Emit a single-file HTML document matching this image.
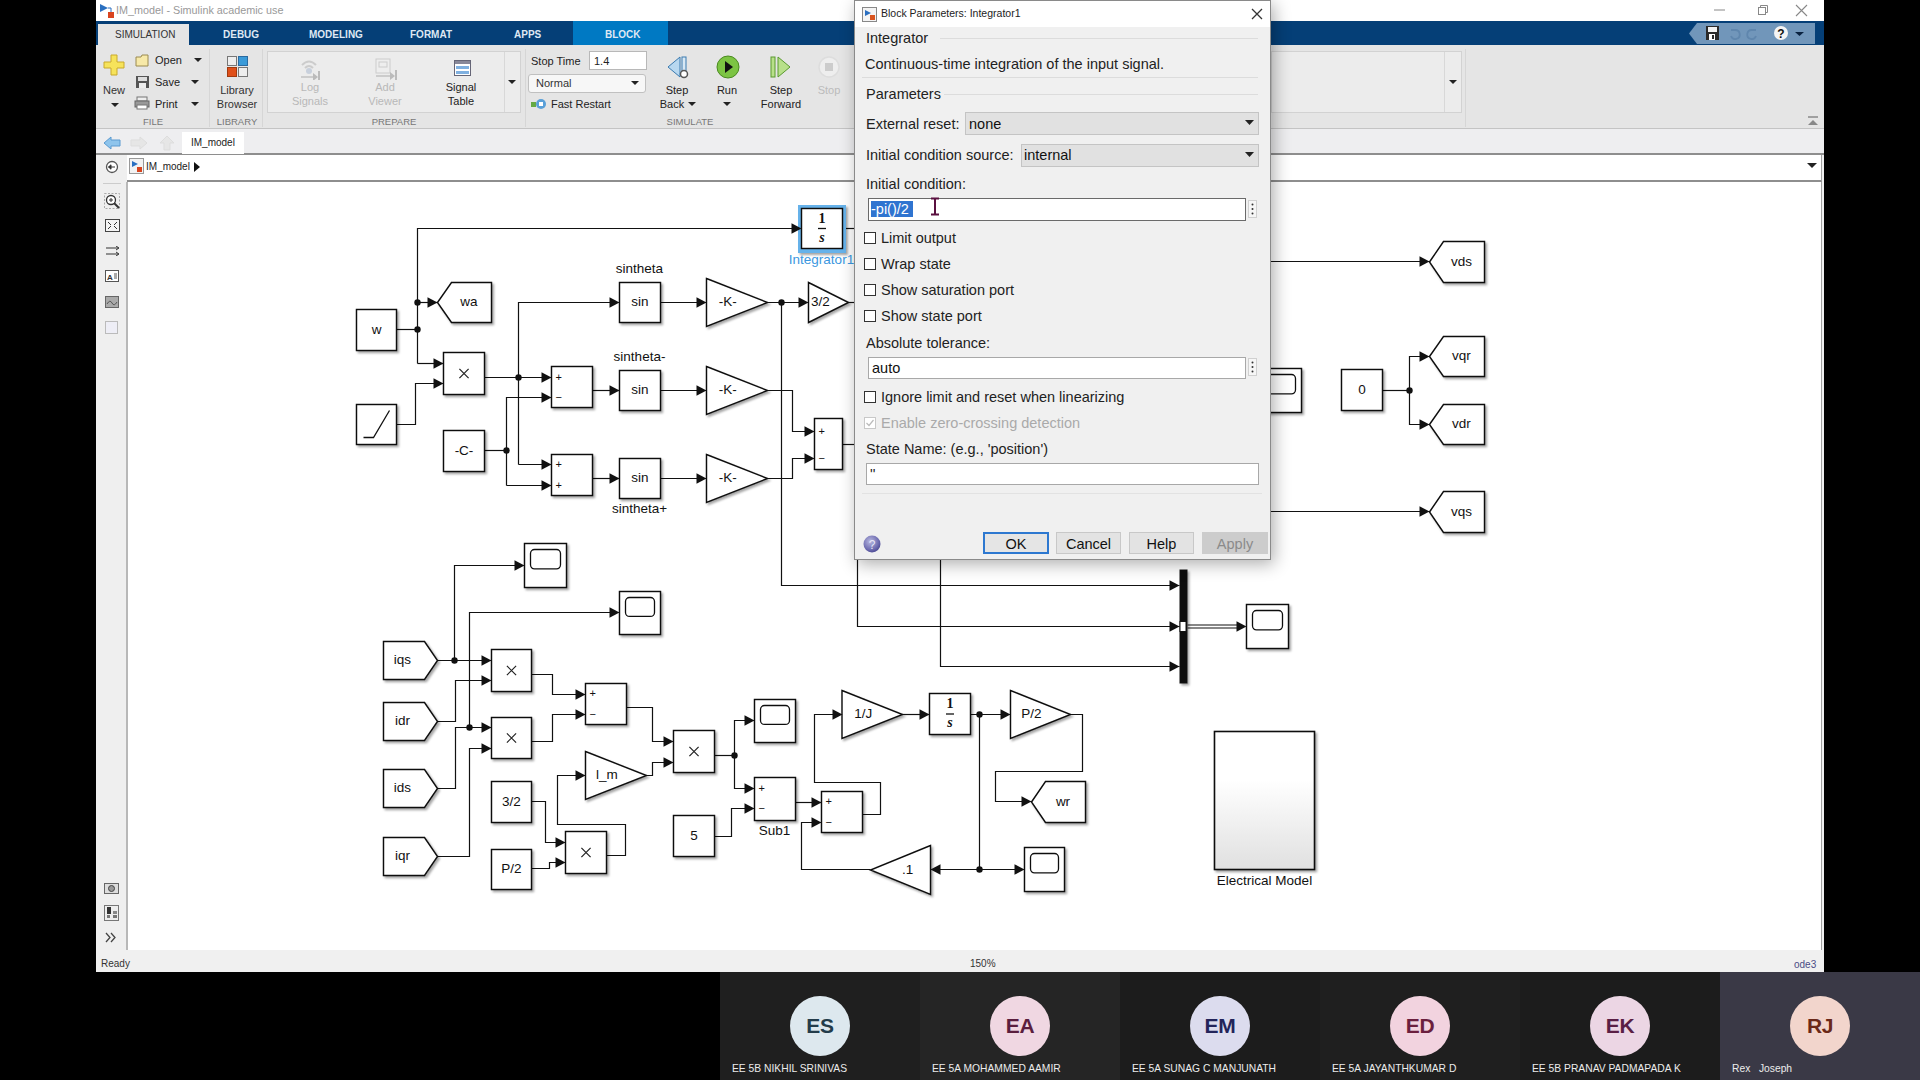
<!DOCTYPE html><html><head><meta charset="utf-8"><style>
*{margin:0;padding:0;box-sizing:border-box}
html,body{width:1920px;height:1080px;overflow:hidden;background:#000;font-family:"Liberation Sans",sans-serif;}
.a{position:absolute}
.t{position:absolute;white-space:nowrap;line-height:1}
</style></head><body>
<div class="a" style="left:96px;top:0px;width:1728px;height:972px;background:#f0f0f0"></div><div class="a" style="left:96px;top:0px;width:1728px;height:21px;background:#fff"></div><div class="t" style="left:116px;top:5px;font-size:10.8px;color:#999;">IM_model - Simulink academic use</div><div class="a" style="left:96px;top:21px;width:1728px;height:24px;background:#053f77"></div><div class="a" style="left:98px;top:24px;width:91px;height:21px;background:#e5e5e5"></div><div class="t" style="left:115px;top:30px;font-size:10px;color:#333;">SIMULATION</div><div class="t" style="left:223px;top:30px;font-size:10px;color:#dfe8f3;font-weight:bold">DEBUG</div><div class="t" style="left:309px;top:30px;font-size:10px;color:#dfe8f3;font-weight:bold">MODELING</div><div class="t" style="left:410px;top:30px;font-size:10px;color:#dfe8f3;font-weight:bold">FORMAT</div><div class="a" style="left:573px;top:21px;width:95px;height:24px;background:#0079c3"></div><div class="t" style="left:514px;top:30px;font-size:10px;color:#dfe8f3;font-weight:bold">APPS</div><div class="t" style="left:605px;top:30px;font-size:10px;color:#dfe8f3;font-weight:bold">BLOCK</div><div class="a" style="left:96px;top:45px;width:1728px;height:84px;background:#e5e5e5;border-bottom:1px solid #c4c4c4"></div><div class="a" style="left:96px;top:129px;width:1728px;height:26px;background:#eeeef0;border-bottom:2px solid #8e8e8e"></div><div class="a" style="left:182px;top:132px;width:62px;height:22px;background:#fff"></div><div class="t" style="left:191px;top:138px;font-size:10px;color:#222;">IM_model</div><div class="a" style="left:126px;top:155px;width:1696px;height:27px;background:#fff;border-bottom:2px solid #8e8e8e;border-right:1px solid #a0a0a0"></div><div class="t" style="left:146px;top:162px;font-size:10px;color:#222;">IM_model</div><div class="a" style="left:96px;top:155px;width:31px;height:795px;background:#efefef"></div><div class="a" style="left:126px;top:182px;width:1696px;height:769px;background:#fff;border-left:2px solid #b8b8b8;border-right:1px solid #a0a0a0;border-bottom:1px solid #a8a8a8"></div><div class="a" style="left:96px;top:950px;width:1728px;height:22px;background:#f0f0f0"></div><div class="t" style="left:101px;top:959px;font-size:10px;color:#333;">Ready</div><div class="t" style="left:970px;top:959px;font-size:10px;color:#333;">150%</div><div class="t" style="left:1794px;top:960px;font-size:10px;color:#4b4b85;">ode3</div><svg class="a" style="left:103px;top:54px" width="22" height="22"><path d="M8,1H14V8H21V14H14V21H8V14H1V8H8Z" fill="#f6e35a" stroke="#c9a92a" stroke-width="1"/></svg><div class="t" style="left:54px;top:85px;width:120px;text-align:center;font-size:11px;color:#333;">New</div><svg class="a" style="left:111px;top:103px" width="8" height="5"><path d="M0,0H8L4,4Z" fill="#222"/></svg><svg class="a" style="left:135px;top:54px" width="15" height="13"><path d="M1,3H6L7,1H13V12H1Z" fill="#f7e9a8" stroke="#9a8a50"/></svg><div class="t" style="left:155px;top:55px;font-size:11px;color:#222;">Open</div><svg class="a" style="left:194px;top:58px" width="8" height="5"><path d="M0,0H8L4,4Z" fill="#222"/></svg><svg class="a" style="left:135px;top:75px" width="15" height="14"><rect x="1" y="1" width="13" height="12" fill="#555"/><rect x="3" y="2" width="9" height="4" fill="#ddd"/><rect x="4" y="8" width="7" height="5" fill="#eee"/></svg><div class="t" style="left:155px;top:77px;font-size:11px;color:#222;">Save</div><svg class="a" style="left:191px;top:80px" width="8" height="5"><path d="M0,0H8L4,4Z" fill="#222"/></svg><svg class="a" style="left:134px;top:96px" width="16" height="14"><rect x="3" y="1" width="10" height="4" fill="#eee" stroke="#777"/><rect x="1" y="5" width="14" height="6" fill="#999" stroke="#666"/><rect x="3" y="9" width="10" height="4" fill="#fff" stroke="#777"/></svg><div class="t" style="left:155px;top:99px;font-size:11px;color:#222;">Print</div><svg class="a" style="left:191px;top:102px" width="8" height="5"><path d="M0,0H8L4,4Z" fill="#222"/></svg><div class="t" style="left:93px;top:117px;width:120px;text-align:center;font-size:9.5px;color:#777;">FILE</div><div class="a" style="left:209px;top:49px;width:1px;height:78px;background:#d6d6d6"></div><svg class="a" style="left:227px;top:56px" width="21" height="21"><rect x="0.5" y="0.5" width="9" height="9" fill="#eee" stroke="#777"/><rect x="11.5" y="0.5" width="9" height="9" fill="#3a9ad8" stroke="#2a6aa0"/><rect x="0.5" y="11.5" width="9" height="9" fill="#e0501a" stroke="#a03a10"/><rect x="11.5" y="11.5" width="9" height="9" fill="#eee" stroke="#777"/></svg><div class="t" style="left:177px;top:85px;width:120px;text-align:center;font-size:11px;color:#333;">Library</div><div class="t" style="left:177px;top:99px;width:120px;text-align:center;font-size:11px;color:#333;">Browser</div><div class="t" style="left:177px;top:117px;width:120px;text-align:center;font-size:9.5px;color:#777;">LIBRARY</div><div class="a" style="left:262px;top:49px;width:1px;height:78px;background:#d6d6d6"></div><div class="a" style="left:267px;top:51px;width:254px;height:62px;background:#ececec;border:1px solid #d2d2d2"></div><div class="a" style="left:504px;top:52px;width:1px;height:60px;background:#d8d8d8"></div><svg class="a" style="left:298px;top:58px" width="24" height="22"><path d="M4,7 Q11,0 18,7" stroke="#ccc" stroke-width="2" fill="none"/><path d="M7,10 Q11,6 15,10" stroke="#ccc" stroke-width="2" fill="none"/><circle cx="11" cy="13" r="3" fill="#c8d0dc"/><path d="M3,19H18" stroke="#ccc" stroke-width="2"/><path d="M15,15L20,19L15,23Z" fill="#bbb"/><path d="M21,13V23" stroke="#bbb" stroke-width="2"/></svg><div class="t" style="left:250px;top:82px;width:120px;text-align:center;font-size:11px;color:#b8b8b8;">Log</div><div class="t" style="left:250px;top:96px;width:120px;text-align:center;font-size:11px;color:#b8b8b8;">Signals</div><svg class="a" style="left:375px;top:58px" width="24" height="22"><rect x="1" y="1" width="14" height="14" fill="#eee" stroke="#ccc"/><rect x="4" y="4" width="8" height="5" fill="none" stroke="#ccc"/><path d="M1,18H18" stroke="#ccc" stroke-width="2"/><path d="M15,14L20,18L15,22Z" fill="#bbb"/><path d="M21,12V22" stroke="#bbb" stroke-width="2"/></svg><div class="t" style="left:325px;top:82px;width:120px;text-align:center;font-size:11px;color:#b8b8b8;">Add</div><div class="t" style="left:325px;top:96px;width:120px;text-align:center;font-size:11px;color:#b8b8b8;">Viewer</div><svg class="a" style="left:454px;top:60px" width="17" height="16"><rect x="0.5" y="0.5" width="16" height="15" fill="#fff" stroke="#667"/><rect x="1" y="1" width="15" height="3" fill="#889"/><rect x="2" y="6" width="13" height="3" fill="#7fb0e0"/><rect x="2" y="11" width="13" height="3" fill="#7fb0e0"/></svg><div class="t" style="left:401px;top:82px;width:120px;text-align:center;font-size:11px;color:#222;">Signal</div><div class="t" style="left:401px;top:96px;width:120px;text-align:center;font-size:11px;color:#222;">Table</div><svg class="a" style="left:508px;top:80px" width="8" height="5"><path d="M0,0H8L4,4Z" fill="#222"/></svg><div class="t" style="left:334px;top:117px;width:120px;text-align:center;font-size:9.5px;color:#777;">PREPARE</div><div class="a" style="left:525px;top:49px;width:1px;height:78px;background:#d6d6d6"></div><div class="t" style="left:531px;top:56px;font-size:11px;color:#222;">Stop Time</div><div class="a" style="left:589px;top:51px;width:58px;height:19px;background:#fff;border:1px solid #b8b8b8"></div><div class="t" style="left:594px;top:56px;font-size:11px;color:#222;">1.4</div><div class="a" style="left:528px;top:74px;width:118px;height:19px;background:#f7f7f7;border:1px solid #c0c0c0;border-radius:3px"></div><div class="t" style="left:536px;top:78px;font-size:11px;color:#333;">Normal</div><svg class="a" style="left:631px;top:81px" width="8" height="5"><path d="M0,0H8L4,4Z" fill="#222"/></svg><svg class="a" style="left:531px;top:98px" width="15" height="12"><rect x="0" y="4" width="5" height="5" fill="#6a4" /><circle cx="10" cy="6" r="5" fill="#5aa0d8"/><rect x="8" y="4" width="4" height="4" fill="#fff"/></svg><div class="t" style="left:551px;top:99px;font-size:11px;color:#222;">Fast Restart</div><svg class="a" style="left:667px;top:55px" width="22" height="24"><path d="M1,12L13,2V22Z" fill="#b8d8f0" stroke="#3a7ab0"/><rect x="15" y="2" width="4" height="16" fill="#d8e8f4" stroke="#3a7ab0"/><circle cx="17" cy="19" r="3.5" fill="#fff" stroke="#555" stroke-width="1.5"/></svg><div class="t" style="left:617px;top:85px;width:120px;text-align:center;font-size:11px;color:#222;">Step</div><div class="t" style="left:612px;top:99px;width:120px;text-align:center;font-size:11px;color:#222;">Back</div><svg class="a" style="left:688px;top:102px" width="8" height="5"><path d="M0,0H8L4,4Z" fill="#222"/></svg><svg class="a" style="left:716px;top:55px" width="24" height="24"><circle cx="12" cy="12" r="11" fill="#7cc443" stroke="#4a8a20"/><path d="M9,6L17,12L9,18Z" fill="#111"/></svg><div class="t" style="left:667px;top:85px;width:120px;text-align:center;font-size:11px;color:#222;">Run</div><svg class="a" style="left:723px;top:102px" width="8" height="5"><path d="M0,0H8L4,4Z" fill="#222"/></svg><svg class="a" style="left:770px;top:56px" width="21" height="22"><rect x="1" y="1" width="4" height="20" fill="#b8e08a" stroke="#5a9a30"/><path d="M8,1L20,11L8,21Z" fill="#b8e08a" stroke="#5a9a30"/></svg><div class="t" style="left:721px;top:85px;width:120px;text-align:center;font-size:11px;color:#222;">Step</div><div class="t" style="left:721px;top:99px;width:120px;text-align:center;font-size:11px;color:#222;">Forward</div><svg class="a" style="left:818px;top:56px" width="22" height="22"><circle cx="11" cy="11" r="10" fill="#eee" stroke="#ddd" stroke-width="1.5"/><rect x="7" y="7" width="8" height="8" fill="#ccc"/></svg><div class="t" style="left:769px;top:85px;width:120px;text-align:center;font-size:11px;color:#bbb;">Stop</div><div class="t" style="left:630px;top:117px;width:120px;text-align:center;font-size:9.5px;color:#777;">SIMULATE</div><div class="a" style="left:1271px;top:51px;width:191px;height:62px;background:#ececec;border:1px solid #d2d2d2"></div><div class="a" style="left:1444px;top:52px;width:1px;height:60px;background:#d8d8d8"></div><svg class="a" style="left:1449px;top:80px" width="8" height="5"><path d="M0,0H8L4,4Z" fill="#222"/></svg><div class="a" style="left:1465px;top:49px;width:1px;height:78px;background:#d6d6d6"></div><svg class="a" style="left:1807px;top:116px" width="12" height="10"><path d="M1,1H11" stroke="#888" stroke-width="1.5"/><path d="M1,9L6,4L11,9Z" fill="#888"/></svg><svg class="a" style="left:1689px;top:23px" width="126" height="21"><path d="M8,0H126V21H8L0,10.5Z" fill="#7196ba"/><rect x="17" y="3" width="13" height="14" fill="#2a2a2a"/><rect x="19" y="4" width="9" height="5" fill="#f2f2f2"/><rect x="20" y="11" width="6" height="6" fill="#fff"/><rect x="23" y="12" width="2" height="4" fill="#2a2a2a"/><path d="M42,13a4.5,4.5 0 1 0 4,-6h-4" stroke="#5f86ad" stroke-width="1.8" fill="none"/><path d="M67,13a4.5,4.5 0 1 1 -4,-6h4" stroke="#5f86ad" stroke-width="1.8" fill="none"/><circle cx="92" cy="10" r="7" fill="#f4f4f4"/><text x="92" y="14.5" font-size="12" font-weight="bold" text-anchor="middle" fill="#111" font-family="Liberation Sans">?</text><path d="M106,9H115L110.5,13Z" fill="#0a2240"/></svg><svg class="a" style="left:1713px;top:4px" width="110" height="14"><path d="M1,6H12" stroke="#888" stroke-width="1"/><rect x="45.5" y="3.5" width="7" height="7" fill="none" stroke="#888"/><path d="M47.5,3.5V1.5H54.5V8.5H52.5" fill="none" stroke="#888"/><path d="M83,1L94,12M94,1L83,12" stroke="#888" stroke-width="1.1"/></svg><svg class="a" style="left:99px;top:3px" width="17" height="16"><path d="M1,1L9,5L1,9Z" fill="#2a6fc0"/><path d="M9,5H12V9" stroke="#2a6fc0" fill="none"/><rect x="9" y="9" width="6" height="6" fill="#d9441e"/></svg><svg class="a" style="left:103px;top:136px" width="18" height="14"><path d="M1,7L8,1V4H17V10H8V13Z" fill="#8ec4ec" stroke="#5a9ad0"/></svg><svg class="a" style="left:130px;top:136px" width="18" height="14"><path d="M17,7L10,1V4H1V10H10V13Z" fill="#e6e6e6" stroke="#ddd"/></svg><svg class="a" style="left:159px;top:135px" width="16" height="16"><path d="M8,1L15,8H11V15H5V8H1Z" fill="#e6e6e6" stroke="#ddd"/></svg><svg class="a" style="left:129px;top:158px" width="15" height="16"><rect x="0.5" y="0.5" width="14" height="15" fill="#f2f2f2" stroke="#999"/><path d="M3,3L9,6L3,9Z" fill="#2a6fc0"/><rect x="8" y="9" width="5" height="5" fill="#d9441e"/></svg><svg class="a" style="left:194px;top:162px" width="6" height="10"><path d="M0,0L6,5L0,10Z" fill="#111"/></svg><svg class="a" style="left:1807px;top:163px" width="10" height="6"><path d="M0,0H10L5,5Z" fill="#222"/></svg><svg class="a" style="left:105px;top:160px" width="14" height="14"><circle cx="7" cy="7" r="5.5" fill="#fff" stroke="#555" stroke-width="1.3"/><path d="M3.5,7H10M3.5,7L6,4.8V9.2Z" stroke="#333" fill="#333"/></svg><div class="a" style="left:103px;top:183px;width:18px;height:1px;background:#ccc"></div><svg class="a" style="left:104px;top:193px" width="17" height="17"><rect x="0.5" y="0.5" width="15" height="15" fill="none" stroke="#aaa" stroke-dasharray="2,1.5"/><circle cx="7" cy="7" r="4.5" fill="#fff" stroke="#333" stroke-width="1.3"/><path d="M10,10L15,15" stroke="#333" stroke-width="2"/><path d="M5,7H9M7,5V9" stroke="#333"/></svg><svg class="a" style="left:105px;top:219px" width="15" height="14"><rect x="0.5" y="0.5" width="14" height="12" fill="#f4f4f4" stroke="#444"/><path d="M3,3L6,6M12,3L9,6M3,10L6,7M12,10L9,7" stroke="#333"/></svg><svg class="a" style="left:105px;top:246px" width="15" height="10"><path d="M1,2H13M1,8H13" stroke="#333" stroke-width="1.2"/><path d="M11,0L14,2L11,4M11,6L14,8L11,10" stroke="#333" fill="none"/></svg><svg class="a" style="left:105px;top:270px" width="15" height="13"><rect x="0.5" y="0.5" width="13" height="11" fill="#fff" stroke="#555"/><text x="5" y="9.5" font-size="8" font-weight="bold" text-anchor="middle" fill="#333" font-family="Liberation Sans">A</text><path d="M9,4H12M9,6H12M9,8H12" stroke="#555"/></svg><svg class="a" style="left:105px;top:296px" width="15" height="13"><rect x="0.5" y="0.5" width="13" height="11" fill="#aaa" stroke="#666"/><path d="M2,8Q5,3 7,7T12,6" stroke="#555" fill="none"/></svg><svg class="a" style="left:105px;top:321px" width="14" height="14"><rect x="0.5" y="0.5" width="12" height="12" fill="#eeeef6" stroke="#bbb"/></svg><svg class="a" style="left:104px;top:881px" width="16" height="13"><rect x="0.5" y="2.5" width="14" height="10" fill="#ddd" stroke="#666"/><circle cx="7.5" cy="7.5" r="3" fill="#999" stroke="#444"/></svg><svg class="a" style="left:104px;top:905px" width="16" height="16"><rect x="0.5" y="0.5" width="14" height="15" fill="#eee" stroke="#777"/><rect x="3" y="2" width="4" height="7" fill="#333"/><rect x="3" y="10" width="3" height="3" fill="#777"/><rect x="9" y="6" width="4" height="3" fill="#888"/><rect x="9" y="10" width="4" height="3" fill="#777"/></svg><svg class="a" style="left:105px;top:932px" width="13" height="11"><path d="M1,1L5,5.5L1,10M6,1L10,5.5L6,10" stroke="#444" stroke-width="1.3" fill="none"/></svg><svg class="a" style="left:0;top:0" width="1920" height="1080" font-family="Liberation Sans, sans-serif"><defs><filter id="sh" x="-20%" y="-20%" width="140%" height="140%"><feDropShadow dx="1.8" dy="2" stdDeviation="1" flood-color="#000" flood-opacity="0.35"/></filter><linearGradient id="emg" x1="0" y1="0" x2="0" y2="1"><stop offset="0.35" stop-color="#fff"/><stop offset="1" stop-color="#e0e0e0"/></linearGradient><clipPath id="cv"><rect x="129" y="181" width="1693" height="767"/></clipPath></defs><g clip-path="url(#cv)"><g transform="translate(0.5,0.5)"><polyline points="396,329 417,329" fill="none" stroke="#111" stroke-width="1.2"/><polyline points="417,363 417,228 801,228" fill="none" stroke="#111" stroke-width="1.2"/><polyline points="417,302 437,302" fill="none" stroke="#111" stroke-width="1.2"/><polyline points="417,363 443,363" fill="none" stroke="#111" stroke-width="1.2"/><polyline points="396,424 415,424 415,383 443,383" fill="none" stroke="#111" stroke-width="1.2"/><polyline points="484,377 551,377" fill="none" stroke="#111" stroke-width="1.2"/><polyline points="518,464 518,302 619,302" fill="none" stroke="#111" stroke-width="1.2"/><polyline points="518,464 551,464" fill="none" stroke="#111" stroke-width="1.2"/><polyline points="484,450 506,450" fill="none" stroke="#111" stroke-width="1.2"/><polyline points="506,485 506,397 551,397" fill="none" stroke="#111" stroke-width="1.2"/><polyline points="506,485 551,485" fill="none" stroke="#111" stroke-width="1.2"/><polyline points="592,390 619,390" fill="none" stroke="#111" stroke-width="1.2"/><polyline points="592,478 619,478" fill="none" stroke="#111" stroke-width="1.2"/><polyline points="660,302 706,302" fill="none" stroke="#111" stroke-width="1.2"/><polyline points="660,390 706,390" fill="none" stroke="#111" stroke-width="1.2"/><polyline points="660,478 706,478" fill="none" stroke="#111" stroke-width="1.2"/><polyline points="767,302 808,302" fill="none" stroke="#111" stroke-width="1.2"/><polyline points="781,302 781,585 1179,585" fill="none" stroke="#111" stroke-width="1.2"/><polyline points="848,302 860,302" fill="none" stroke="#111" stroke-width="1.2"/><polyline points="767,390 792,390 792,431 814,431" fill="none" stroke="#111" stroke-width="1.2"/><polyline points="767,478 792,478 792,458 814,458" fill="none" stroke="#111" stroke-width="1.2"/><polyline points="842,444 860,444" fill="none" stroke="#111" stroke-width="1.2"/><polyline points="842,228 860,228" fill="none" stroke="#111" stroke-width="1.2"/><polyline points="857,550 857,626 1179,626" fill="none" stroke="#111" stroke-width="1.2"/><polyline points="940,550 940,666 1179,666" fill="none" stroke="#111" stroke-width="1.2"/><line x1="1187" y1="624.5" x2="1238" y2="624.5" stroke="#111" stroke-width="1.2"/><line x1="1187" y1="627.5" x2="1238" y2="627.5" stroke="#111" stroke-width="1.2"/><polyline points="1260,261 1429,261" fill="none" stroke="#111" stroke-width="1.2"/><polyline points="1260,511 1429,511" fill="none" stroke="#111" stroke-width="1.2"/><polyline points="1382,390 1409,390" fill="none" stroke="#111" stroke-width="1.2"/><polyline points="1409,390 1409,356 1429,356" fill="none" stroke="#111" stroke-width="1.2"/><polyline points="1409,390 1409,424 1429,424" fill="none" stroke="#111" stroke-width="1.2"/><polyline points="437,660 491,660" fill="none" stroke="#111" stroke-width="1.2"/><polyline points="454,660 454,565 524,565" fill="none" stroke="#111" stroke-width="1.2"/><polyline points="437,721 455,721 455,680 491,680" fill="none" stroke="#111" stroke-width="1.2"/><polyline points="437,788 455,788 455,727 491,727" fill="none" stroke="#111" stroke-width="1.2"/><polyline points="469,727 469,612 619,612" fill="none" stroke="#111" stroke-width="1.2"/><polyline points="437,856 469,856 469,748 491,748" fill="none" stroke="#111" stroke-width="1.2"/><polyline points="531,674 552,674 552,694 585,694" fill="none" stroke="#111" stroke-width="1.2"/><polyline points="531,741 552,741 552,714 585,714" fill="none" stroke="#111" stroke-width="1.2"/><polyline points="626,707 652,707 652,741 673,741" fill="none" stroke="#111" stroke-width="1.2"/><polyline points="646,775 652,775 652,762 673,762" fill="none" stroke="#111" stroke-width="1.2"/><polyline points="531,801 545,801 545,842 565,842" fill="none" stroke="#111" stroke-width="1.2"/><polyline points="531,868 549,868 549,862 565,862" fill="none" stroke="#111" stroke-width="1.2"/><polyline points="606,855 625,855 625,824 557,824 557,775 585,775" fill="none" stroke="#111" stroke-width="1.2"/><polyline points="714,755 734,755" fill="none" stroke="#111" stroke-width="1.2"/><polyline points="734,755 734,720 754,720" fill="none" stroke="#111" stroke-width="1.2"/><polyline points="734,755 734,788 754,788" fill="none" stroke="#111" stroke-width="1.2"/><polyline points="714,836 731,836 731,808 754,808" fill="none" stroke="#111" stroke-width="1.2"/><polyline points="795,802 821,802" fill="none" stroke="#111" stroke-width="1.2"/><polyline points="862,814 880,814 880,782 814,782 814,714 842,714" fill="none" stroke="#111" stroke-width="1.2"/><polyline points="902,714 929,714" fill="none" stroke="#111" stroke-width="1.2"/><polyline points="970,714 1010,714" fill="none" stroke="#111" stroke-width="1.2"/><polyline points="979,714 979,869" fill="none" stroke="#111" stroke-width="1.2"/><polyline points="979,869 1024,869" fill="none" stroke="#111" stroke-width="1.2"/><polyline points="979,869 930,869" fill="none" stroke="#111" stroke-width="1.2"/><polyline points="870,869 801,869 801,822 821,822" fill="none" stroke="#111" stroke-width="1.2"/><polyline points="1070,714 1082,714 1082,771 995,771 995,801 1031,801" fill="none" stroke="#111" stroke-width="1.2"/><g filter="url(#sh)"><rect x="356" y="309" width="40" height="41" fill="#fff" stroke="#111" stroke-width="1.45"/><rect x="356" y="404" width="40" height="40" fill="#fff" stroke="#111" stroke-width="1.45"/><polygon points="437,302.0 451,282 491,282 491,322 451,322" fill="#fff" stroke="#111" stroke-width="1.45" stroke-linejoin="miter"/><rect x="443" y="352" width="41" height="42" fill="#fff" stroke="#111" stroke-width="1.45"/><rect x="443" y="430" width="41" height="41" fill="#fff" stroke="#111" stroke-width="1.45"/><rect x="551" y="366" width="41" height="41" fill="#fff" stroke="#111" stroke-width="1.45"/><rect x="551" y="454" width="41" height="41" fill="#fff" stroke="#111" stroke-width="1.45"/><rect x="619" y="282" width="41" height="40" fill="#fff" stroke="#111" stroke-width="1.45"/><rect x="619" y="370" width="41" height="40" fill="#fff" stroke="#111" stroke-width="1.45"/><rect x="619" y="458" width="41" height="40" fill="#fff" stroke="#111" stroke-width="1.45"/><polygon points="706,278 767,302.0 706,326" fill="#fff" stroke="#111" stroke-width="1.45" stroke-linejoin="miter"/><polygon points="706,366 767,390.0 706,414" fill="#fff" stroke="#111" stroke-width="1.45" stroke-linejoin="miter"/><polygon points="706,454 767,478.0 706,502" fill="#fff" stroke="#111" stroke-width="1.45" stroke-linejoin="miter"/><polygon points="808,282 848,302.0 808,322" fill="#fff" stroke="#111" stroke-width="1.45" stroke-linejoin="miter"/><rect x="814" y="418" width="28" height="51" fill="#fff" stroke="#111" stroke-width="1.45"/><rect x="797.5" y="204.5" width="48" height="48" fill="#66b2ea" stroke="none"/><rect x="801" y="208" width="41" height="40" fill="#fff" stroke="#111" stroke-width="1.45"/><rect x="1179" y="569" width="8" height="114" fill="#111"/><rect x="1246" y="604" width="42" height="44" fill="#fff" stroke="#111" stroke-width="1.45"/><rect x="1252" y="610" width="30" height="19.36" rx="4" fill="#fff" stroke="#111" stroke-width="1.3"/><polygon points="1429,261.5 1443,241 1484,241 1484,282 1443,282" fill="#fff" stroke="#111" stroke-width="1.45" stroke-linejoin="miter"/><polygon points="1429,356.0 1443,336 1484,336 1484,376 1443,376" fill="#fff" stroke="#111" stroke-width="1.45" stroke-linejoin="miter"/><polygon points="1429,424.0 1443,404 1484,404 1484,444 1443,444" fill="#fff" stroke="#111" stroke-width="1.45" stroke-linejoin="miter"/><polygon points="1429,511.5 1443,491 1484,491 1484,532 1443,532" fill="#fff" stroke="#111" stroke-width="1.45" stroke-linejoin="miter"/><rect x="1341" y="369" width="41" height="41" fill="#fff" stroke="#111" stroke-width="1.45"/><rect x="1259" y="368" width="42" height="44" fill="#fff" stroke="#111" stroke-width="1.45"/><rect x="1265" y="374" width="30" height="19.36" rx="4" fill="#fff" stroke="#111" stroke-width="1.3"/><rect x="524" y="543" width="42" height="44" fill="#fff" stroke="#111" stroke-width="1.45"/><rect x="530" y="549" width="30" height="19.36" rx="4" fill="#fff" stroke="#111" stroke-width="1.3"/><rect x="619" y="591" width="41" height="43" fill="#fff" stroke="#111" stroke-width="1.45"/><rect x="625" y="597" width="29" height="18.92" rx="4" fill="#fff" stroke="#111" stroke-width="1.3"/><polygon points="383,641 424,641 437,660.0 424,679 383,679" fill="#fff" stroke="#111" stroke-width="1.45" stroke-linejoin="miter"/><polygon points="383,702 424,702 437,721.0 424,740 383,740" fill="#fff" stroke="#111" stroke-width="1.45" stroke-linejoin="miter"/><polygon points="383,769 424,769 437,788.0 424,807 383,807" fill="#fff" stroke="#111" stroke-width="1.45" stroke-linejoin="miter"/><polygon points="383,837 424,837 437,856.0 424,875 383,875" fill="#fff" stroke="#111" stroke-width="1.45" stroke-linejoin="miter"/><rect x="491" y="649" width="40" height="42" fill="#fff" stroke="#111" stroke-width="1.45"/><rect x="491" y="717" width="40" height="41" fill="#fff" stroke="#111" stroke-width="1.45"/><rect x="585" y="683" width="41" height="41" fill="#fff" stroke="#111" stroke-width="1.45"/><polygon points="585,751 646,775.0 585,799" fill="#fff" stroke="#111" stroke-width="1.45" stroke-linejoin="miter"/><rect x="491" y="781" width="40" height="41" fill="#fff" stroke="#111" stroke-width="1.45"/><rect x="491" y="849" width="40" height="40" fill="#fff" stroke="#111" stroke-width="1.45"/><rect x="565" y="831" width="41" height="42" fill="#fff" stroke="#111" stroke-width="1.45"/><rect x="673" y="730" width="41" height="42" fill="#fff" stroke="#111" stroke-width="1.45"/><rect x="754" y="699" width="41" height="43" fill="#fff" stroke="#111" stroke-width="1.45"/><rect x="760" y="705" width="29" height="18.92" rx="4" fill="#fff" stroke="#111" stroke-width="1.3"/><rect x="754" y="777" width="41" height="43" fill="#fff" stroke="#111" stroke-width="1.45"/><rect x="673" y="815" width="41" height="41" fill="#fff" stroke="#111" stroke-width="1.45"/><rect x="821" y="791" width="41" height="41" fill="#fff" stroke="#111" stroke-width="1.45"/><polygon points="841.5,690 902,714.0 841.5,738" fill="#fff" stroke="#111" stroke-width="1.45" stroke-linejoin="miter"/><rect x="929" y="693" width="41" height="41" fill="#fff" stroke="#111" stroke-width="1.45"/><polygon points="930,845 870,869.5 930,894" fill="#fff" stroke="#111" stroke-width="1.45" stroke-linejoin="miter"/><polygon points="1010,690 1070,714.0 1010,738" fill="#fff" stroke="#111" stroke-width="1.45" stroke-linejoin="miter"/><polygon points="1031,801.5 1045,781 1085,781 1085,822 1045,822" fill="#fff" stroke="#111" stroke-width="1.45" stroke-linejoin="miter"/><rect x="1024" y="847" width="40" height="44" fill="#fff" stroke="#111" stroke-width="1.45"/><rect x="1030" y="853" width="28" height="19.36" rx="4" fill="#fff" stroke="#111" stroke-width="1.3"/><rect x="1214" y="731" width="100" height="138" fill="url(#emg)" stroke="#111" stroke-width="1.6"/></g><polyline points="363,437 373,437 389,410" fill="none" stroke="#111" stroke-width="1.3"/><path d="M458.9,368.4L468.1,377.6M468.1,368.4L458.9,377.6" stroke="#222" stroke-width="1.2"/><line x1="817.5" y1="228.0" x2="825.5" y2="228.0" stroke="#111" stroke-width="1.3"/><rect x="1179.5" y="621" width="6" height="10" fill="#fff" stroke="#111" stroke-width="1"/><path d="M506.4,665.4L515.6,674.6M515.6,665.4L506.4,674.6" stroke="#222" stroke-width="1.2"/><path d="M506.4,732.9L515.6,742.1M515.6,732.9L506.4,742.1" stroke="#222" stroke-width="1.2"/><path d="M580.9,847.4L590.1,856.6M590.1,847.4L580.9,856.6" stroke="#222" stroke-width="1.2"/><path d="M688.9,746.4L698.1,755.6M698.1,746.4L688.9,755.6" stroke="#222" stroke-width="1.2"/><line x1="945.5" y1="713.5" x2="953.5" y2="713.5" stroke="#111" stroke-width="1.3"/><circle cx="417" cy="329" r="3.2" fill="#111"/><polygon points="801,228 791,222.7 791,233.3" fill="#111"/><polygon points="437,302 427,296.7 427,307.3" fill="#111"/><circle cx="417" cy="302" r="3.2" fill="#111"/><polygon points="443,363 433,357.7 433,368.3" fill="#111"/><polygon points="443,383 433,377.7 433,388.3" fill="#111"/><polygon points="551,377 541,371.7 541,382.3" fill="#111"/><circle cx="518" cy="377" r="3.2" fill="#111"/><polygon points="619,302 609,296.7 609,307.3" fill="#111"/><polygon points="551,464 541,458.7 541,469.3" fill="#111"/><circle cx="506" cy="450" r="3.2" fill="#111"/><polygon points="551,397 541,391.7 541,402.3" fill="#111"/><polygon points="551,485 541,479.7 541,490.3" fill="#111"/><polygon points="619,390 609,384.7 609,395.3" fill="#111"/><polygon points="619,478 609,472.7 609,483.3" fill="#111"/><polygon points="706,302 696,296.7 696,307.3" fill="#111"/><polygon points="706,390 696,384.7 696,395.3" fill="#111"/><polygon points="706,478 696,472.7 696,483.3" fill="#111"/><polygon points="808,302 798,296.7 798,307.3" fill="#111"/><circle cx="781" cy="302" r="3.2" fill="#111"/><polygon points="1179,585 1169,579.7 1169,590.3" fill="#111"/><polygon points="814,431 804,425.7 804,436.3" fill="#111"/><polygon points="814,458 804,452.7 804,463.3" fill="#111"/><polygon points="1179,626 1169,620.7 1169,631.3" fill="#111"/><polygon points="1179,666 1169,660.7 1169,671.3" fill="#111"/><polygon points="1246,626 1236,620.7 1236,631.3" fill="#111"/><polygon points="1429,261 1419,255.7 1419,266.3" fill="#111"/><polygon points="1429,511 1419,505.7 1419,516.3" fill="#111"/><circle cx="1409" cy="390" r="3.2" fill="#111"/><polygon points="1429,356 1419,350.7 1419,361.3" fill="#111"/><polygon points="1429,424 1419,418.7 1419,429.3" fill="#111"/><polygon points="491,660 481,654.7 481,665.3" fill="#111"/><circle cx="454" cy="660" r="3.2" fill="#111"/><polygon points="524,565 514,559.7 514,570.3" fill="#111"/><polygon points="491,680 481,674.7 481,685.3" fill="#111"/><polygon points="491,727 481,721.7 481,732.3" fill="#111"/><circle cx="469" cy="727" r="3.2" fill="#111"/><polygon points="619,612 609,606.7 609,617.3" fill="#111"/><polygon points="491,748 481,742.7 481,753.3" fill="#111"/><polygon points="585,694 575,688.7 575,699.3" fill="#111"/><polygon points="585,714 575,708.7 575,719.3" fill="#111"/><polygon points="673,741 663,735.7 663,746.3" fill="#111"/><polygon points="673,762 663,756.7 663,767.3" fill="#111"/><polygon points="565,842 555,836.7 555,847.3" fill="#111"/><polygon points="565,862 555,856.7 555,867.3" fill="#111"/><polygon points="585,775 575,769.7 575,780.3" fill="#111"/><circle cx="734" cy="755" r="3.2" fill="#111"/><polygon points="754,720 744,714.7 744,725.3" fill="#111"/><polygon points="754,788 744,782.7 744,793.3" fill="#111"/><polygon points="754,808 744,802.7 744,813.3" fill="#111"/><polygon points="821,802 811,796.7 811,807.3" fill="#111"/><polygon points="842,714 832,708.7 832,719.3" fill="#111"/><polygon points="929,714 919,708.7 919,719.3" fill="#111"/><polygon points="1010,714 1000,708.7 1000,719.3" fill="#111"/><circle cx="979" cy="714" r="3.2" fill="#111"/><circle cx="979" cy="869" r="3.2" fill="#111"/><polygon points="1024,869 1014,863.7 1014,874.3" fill="#111"/><polygon points="930,869 940,863.7 940,874.3" fill="#111"/><polygon points="821,822 811,816.7 811,827.3" fill="#111"/><polygon points="1031,801 1021,795.7 1021,806.3" fill="#111"/><text x="376.0" y="328.5" font-size="13.5" fill="#111" text-anchor="middle" dominant-baseline="central" >w</text><text x="468.5" y="301.0" font-size="13.5" fill="#111" text-anchor="middle" dominant-baseline="central" >wa</text><text x="463.5" y="449.5" font-size="13.5" fill="#111" text-anchor="middle" dominant-baseline="central" >-C-</text><text x="555" y="376" font-size="11" fill="#111" text-anchor="start" dominant-baseline="central" >+</text><text x="555" y="396" font-size="11" fill="#111" text-anchor="start" dominant-baseline="central" >−</text><text x="555" y="463" font-size="11" fill="#111" text-anchor="start" dominant-baseline="central" >+</text><text x="555" y="484" font-size="11" fill="#111" text-anchor="start" dominant-baseline="central" >+</text><text x="639.5" y="301.0" font-size="13.5" fill="#111" text-anchor="middle" dominant-baseline="central" >sin</text><text x="639.5" y="389.0" font-size="13.5" fill="#111" text-anchor="middle" dominant-baseline="central" >sin</text><text x="639.5" y="477.0" font-size="13.5" fill="#111" text-anchor="middle" dominant-baseline="central" >sin</text><text x="639" y="268" font-size="13.5" fill="#111" text-anchor="middle" dominant-baseline="central" >sintheta</text><text x="639" y="356" font-size="13.5" fill="#111" text-anchor="middle" dominant-baseline="central" >sintheta-</text><text x="639" y="508" font-size="13.5" fill="#111" text-anchor="middle" dominant-baseline="central" >sintheta+</text><text x="727.35" y="301.0" font-size="13.5" fill="#111" text-anchor="middle" dominant-baseline="central" >-K-</text><text x="727.35" y="389.0" font-size="13.5" fill="#111" text-anchor="middle" dominant-baseline="central" >-K-</text><text x="727.35" y="477.0" font-size="13.5" fill="#111" text-anchor="middle" dominant-baseline="central" >-K-</text><text x="820.0" y="301.0" font-size="13.5" fill="#111" text-anchor="middle" dominant-baseline="central" >3/2</text><text x="818" y="430" font-size="11" fill="#111" text-anchor="start" dominant-baseline="central" >+</text><text x="818" y="457" font-size="11" fill="#111" text-anchor="start" dominant-baseline="central" >−</text><text x="821.5" y="222.0" font-size="14" font-weight="bold" font-family="Liberation Serif" fill="#111" text-anchor="middle">1</text><text x="821.5" y="241.0" font-size="14" font-weight="bold" font-family="Liberation Serif" font-style="italic" fill="#111" text-anchor="middle">s</text><text x="821" y="259" font-size="13.5" fill="#3b97e0" text-anchor="middle" dominant-baseline="central" >Integrator1</text><text x="1461.0" y="260.5" font-size="13.5" fill="#111" text-anchor="middle" dominant-baseline="central" >vds</text><text x="1461.0" y="355.0" font-size="13.5" fill="#111" text-anchor="middle" dominant-baseline="central" >vqr</text><text x="1461.0" y="423.0" font-size="13.5" fill="#111" text-anchor="middle" dominant-baseline="central" >vdr</text><text x="1461.0" y="510.5" font-size="13.5" fill="#111" text-anchor="middle" dominant-baseline="central" >vqs</text><text x="1361.5" y="388.5" font-size="13.5" fill="#111" text-anchor="middle" dominant-baseline="central" >0</text><text x="402.0" y="659.0" font-size="13.5" fill="#111" text-anchor="middle" dominant-baseline="central" >iqs</text><text x="402.0" y="720.0" font-size="13.5" fill="#111" text-anchor="middle" dominant-baseline="central" >idr</text><text x="402.0" y="787.0" font-size="13.5" fill="#111" text-anchor="middle" dominant-baseline="central" >ids</text><text x="402.0" y="855.0" font-size="13.5" fill="#111" text-anchor="middle" dominant-baseline="central" >iqr</text><text x="589" y="692.5" font-size="11" fill="#111" text-anchor="start" dominant-baseline="central" >+</text><text x="589" y="713" font-size="11" fill="#111" text-anchor="start" dominant-baseline="central" >−</text><text x="606.35" y="774.0" font-size="13.5" fill="#111" text-anchor="middle" dominant-baseline="central" >l_m</text><text x="511.0" y="800.5" font-size="13.5" fill="#111" text-anchor="middle" dominant-baseline="central" >3/2</text><text x="511.0" y="868.0" font-size="13.5" fill="#111" text-anchor="middle" dominant-baseline="central" >P/2</text><text x="758" y="787" font-size="11" fill="#111" text-anchor="start" dominant-baseline="central" >+</text><text x="758" y="807" font-size="11" fill="#111" text-anchor="start" dominant-baseline="central" >−</text><text x="774" y="830" font-size="13.5" fill="#111" text-anchor="middle" dominant-baseline="central" >Sub1</text><text x="693.5" y="834.5" font-size="13.5" fill="#111" text-anchor="middle" dominant-baseline="central" >5</text><text x="825" y="800.6" font-size="11" fill="#111" text-anchor="start" dominant-baseline="central" >+</text><text x="825" y="821" font-size="11" fill="#111" text-anchor="start" dominant-baseline="central" >−</text><text x="862.675" y="713.0" font-size="13.5" fill="#111" text-anchor="middle" dominant-baseline="central" >1/J</text><text x="949.5" y="707.5" font-size="14" font-weight="bold" font-family="Liberation Serif" fill="#111" text-anchor="middle">1</text><text x="949.5" y="726.5" font-size="14" font-weight="bold" font-family="Liberation Serif" font-style="italic" fill="#111" text-anchor="middle">s</text><text x="907.2" y="868.5" font-size="13.5" fill="#111" text-anchor="middle" dominant-baseline="central" >.1</text><text x="1031.0" y="713.0" font-size="13.5" fill="#111" text-anchor="middle" dominant-baseline="central" >P/2</text><text x="1062.5" y="800.5" font-size="13.5" fill="#111" text-anchor="middle" dominant-baseline="central" >wr</text><text x="1264" y="880" font-size="13.5" fill="#111" text-anchor="middle" dominant-baseline="central" >Electrical Model</text></g></g></svg><div class="a" style="left:854px;top:0px;width:417px;height:560px;background:#f0f0f0;border:1px solid #8a8a8a;box-shadow:3px 4px 16px rgba(0,0,0,0.32)"></div><div class="a" style="left:855px;top:1px;width:415px;height:26px;background:#fff"></div><svg class="a" style="left:862px;top:7px" width="15" height="15"><rect x="0.5" y="0.5" width="14" height="14" fill="#f4f4f4" stroke="#888"/><path d="M3,3 L9,6 L3,9 Z" fill="#2a6fc0"/><rect x="8" y="8" width="5" height="5" fill="#d9541e"/></svg><div class="t" style="left:881px;top:8px;font-size:10.5px;color:#222;">Block Parameters: Integrator1</div><svg class="a" style="left:1251px;top:8px" width="12" height="12"><path d="M1,1L11,11M11,1L1,11" stroke="#333" stroke-width="1.3"/></svg><div class="t" style="left:866px;top:31px;font-size:14.5px;color:#222;">Integrator</div><div class="a" style="left:940px;top:38px;width:318px;height:1px;background:#dcdcdc"></div><div class="t" style="left:865px;top:57px;font-size:14.5px;color:#222;">Continuous-time integration of the input signal.</div><div class="a" style="left:862px;top:77px;width:396px;height:1px;background:#dcdcdc"></div><div class="t" style="left:866px;top:87px;font-size:14.5px;color:#222;">Parameters</div><div class="a" style="left:944px;top:94px;width:314px;height:1px;background:#dcdcdc"></div><div class="t" style="left:866px;top:117px;font-size:14.5px;color:#222;">External reset:</div><div class="a" style="left:965px;top:112px;width:294px;height:23px;background:#e1e1e1;border:1px solid #c4c4c4"></div><div class="t" style="left:969px;top:117px;font-size:14.5px;color:#111;">none</div><svg class="a" style="left:1245px;top:120px" width="9" height="6"><path d="M0,0H9L4.5,5Z" fill="#222"/></svg><div class="t" style="left:866px;top:148px;font-size:14.5px;color:#222;">Initial condition source:</div><div class="a" style="left:1021px;top:144px;width:238px;height:23px;background:#e1e1e1;border:1px solid #c4c4c4"></div><div class="t" style="left:1024px;top:148px;font-size:14.5px;color:#111;">internal</div><svg class="a" style="left:1245px;top:152px" width="9" height="6"><path d="M0,0H9L4.5,5Z" fill="#222"/></svg><div class="t" style="left:866px;top:177px;font-size:14.5px;color:#222;">Initial condition:</div><div class="a" style="left:868px;top:198px;width:378px;height:23px;background:#fff;border:1px solid #6a6a6a"></div><div class="a" style="left:871px;top:201px;width:42px;height:16px;background:#2f74d0"></div><div class="t" style="left:871px;top:202px;font-size:14.5px;color:#fff;">-pi()/2</div><svg class="a" style="left:929px;top:197px" width="12" height="20"><path d="M2,1.5H10M6,1.5V17.5M2,17.5H10" stroke="#5a1040" stroke-width="2"/></svg><svg class="a" style="left:1248px;top:200px" width="9" height="18"><rect x="0.5" y="0.5" width="8" height="17" fill="#f6f6f6" stroke="#d0d0d0"/><circle cx="4.5" cy="4.5" r="1" fill="#333"/><circle cx="4.5" cy="9" r="1" fill="#333"/><circle cx="4.5" cy="13.5" r="1" fill="#333"/></svg><div class="a" style="left:864px;top:232px;width:12px;height:12px;background:#fff;border:1px solid #333"></div><div class="t" style="left:881px;top:231px;font-size:14.5px;color:#222;">Limit output</div><div class="a" style="left:864px;top:258px;width:12px;height:12px;background:#fff;border:1px solid #333"></div><div class="t" style="left:881px;top:257px;font-size:14.5px;color:#222;">Wrap state</div><div class="a" style="left:864px;top:284px;width:12px;height:12px;background:#fff;border:1px solid #333"></div><div class="t" style="left:881px;top:283px;font-size:14.5px;color:#222;">Show saturation port</div><div class="a" style="left:864px;top:310px;width:12px;height:12px;background:#fff;border:1px solid #333"></div><div class="t" style="left:881px;top:309px;font-size:14.5px;color:#222;">Show state port</div><div class="t" style="left:866px;top:336px;font-size:14.5px;color:#222;">Absolute tolerance:</div><div class="a" style="left:868px;top:357px;width:378px;height:22px;background:#fff;border:1px solid #a8a8a8"></div><div class="t" style="left:872px;top:361px;font-size:14.5px;color:#111;">auto</div><svg class="a" style="left:1248px;top:358px" width="9" height="18"><rect x="0.5" y="0.5" width="8" height="17" fill="#f6f6f6" stroke="#d0d0d0"/><circle cx="4.5" cy="4.5" r="1" fill="#333"/><circle cx="4.5" cy="9" r="1" fill="#333"/><circle cx="4.5" cy="13.5" r="1" fill="#333"/></svg><div class="a" style="left:864px;top:391px;width:12px;height:12px;background:#fff;border:1px solid #333"></div><div class="t" style="left:881px;top:390px;font-size:14.5px;color:#222;">Ignore limit and reset when linearizing</div><div class="a" style="left:864px;top:417px;width:12px;height:12px;background:#fff;border:1px solid #c8c8c8"></div><svg class="a" style="left:865px;top:418px" width="10" height="10"><path d="M1.5,5L4,7.5L8.5,2" stroke="#bbb" stroke-width="1.2" fill="none"/></svg><div class="t" style="left:881px;top:416px;font-size:14.5px;color:#aaa;">Enable zero-crossing detection</div><div class="t" style="left:866px;top:442px;font-size:14.5px;color:#222;">State Name: (e.g., 'position')</div><div class="a" style="left:866px;top:463px;width:393px;height:22px;background:#fff;border:1px solid #a8a8a8"></div><div class="t" style="left:870px;top:467px;font-size:14px;color:#111;">''</div><div class="a" style="left:862px;top:493px;width:400px;height:1px;background:#e2e2e2"></div><svg class="a" style="left:863px;top:535px" width="18" height="18"><defs><radialGradient id="hg" cx="0.4" cy="0.35" r="0.75"><stop offset="0" stop-color="#b8b8e0"/><stop offset="0.65" stop-color="#6e6cb0"/><stop offset="1" stop-color="#3e3c88"/></radialGradient></defs><circle cx="9" cy="9" r="8.5" fill="url(#hg)"/><text x="9" y="13.5" font-size="12" text-anchor="middle" fill="#e8e8f8" font-family="Liberation Sans">?</text></svg><div class="a" style="left:983px;top:532px;width:66px;height:22px;background:#e3e3e3;border:1px solid #c8c8c8;border:2px solid #2d78d0;background:#e5e5e5"></div><div class="t" style="left:983px;top:537px;width:66px;text-align:center;font-size:14.5px;color:#111">OK</div><div class="a" style="left:1056px;top:532px;width:65px;height:22px;background:#e3e3e3;border:1px solid #c8c8c8;"></div><div class="t" style="left:1056px;top:537px;width:65px;text-align:center;font-size:14.5px;color:#111">Cancel</div><div class="a" style="left:1129px;top:532px;width:65px;height:22px;background:#e3e3e3;border:1px solid #c8c8c8;"></div><div class="t" style="left:1129px;top:537px;width:65px;text-align:center;font-size:14.5px;color:#111">Help</div><div class="a" style="left:1202px;top:532px;width:66px;height:22px;background:#e3e3e3;border:1px solid #c8c8c8;background:#cccccc;border-color:#cccccc"></div><div class="t" style="left:1202px;top:537px;width:66px;text-align:center;font-size:14.5px;color:#8a8a8a">Apply</div><div class="a" style="left:720px;top:972px;width:200px;height:108px;background:#1f1f1f"></div><div class="a" style="left:790px;top:996px;width:60px;height:60px;background:#dde8ee;border-radius:50%"></div><div class="t" style="left:790px;top:1015px;width:60px;text-align:center;font-size:21px;font-weight:bold;letter-spacing:-0.3px;color:#233c4a">ES</div><div class="t" style="left:732px;top:1064px;font-size:10.3px;color:#ececec;">EE 5B NIKHIL SRINIVAS</div><div class="a" style="left:920px;top:972px;width:200px;height:108px;background:#252525"></div><div class="a" style="left:990px;top:996px;width:60px;height:60px;background:#f0d7e2;border-radius:50%"></div><div class="t" style="left:990px;top:1015px;width:60px;text-align:center;font-size:21px;font-weight:bold;letter-spacing:-0.3px;color:#5a1e3e">EA</div><div class="t" style="left:932px;top:1064px;font-size:10.3px;color:#ececec;">EE 5A MOHAMMED AAMIR</div><div class="a" style="left:1120px;top:972px;width:200px;height:108px;background:#1c1c1c"></div><div class="a" style="left:1190px;top:996px;width:60px;height:60px;background:#dcdcee;border-radius:50%"></div><div class="t" style="left:1190px;top:1015px;width:60px;text-align:center;font-size:21px;font-weight:bold;letter-spacing:-0.3px;color:#23245a">EM</div><div class="t" style="left:1132px;top:1064px;font-size:10.3px;color:#ececec;">EE 5A SUNAG C MANJUNATH</div><div class="a" style="left:1320px;top:972px;width:200px;height:108px;background:#1f1f1f"></div><div class="a" style="left:1390px;top:996px;width:60px;height:60px;background:#f2d3df;border-radius:50%"></div><div class="t" style="left:1390px;top:1015px;width:60px;text-align:center;font-size:21px;font-weight:bold;letter-spacing:-0.3px;color:#6b1f3e">ED</div><div class="t" style="left:1332px;top:1064px;font-size:10.3px;color:#ececec;">EE 5A JAYANTHKUMAR D</div><div class="a" style="left:1520px;top:972px;width:200px;height:108px;background:#1c1c1c"></div><div class="a" style="left:1590px;top:996px;width:60px;height:60px;background:#ecd6e4;border-radius:50%"></div><div class="t" style="left:1590px;top:1015px;width:60px;text-align:center;font-size:21px;font-weight:bold;letter-spacing:-0.3px;color:#5a1f45">EK</div><div class="t" style="left:1532px;top:1064px;font-size:10.3px;color:#ececec;">EE 5B PRANAV PADMAPADA K</div><div class="a" style="left:1720px;top:972px;width:200px;height:108px;background:#3a3946"></div><div class="a" style="left:1790px;top:996px;width:60px;height:60px;background:#f2d5cc;border-radius:50%"></div><div class="t" style="left:1790px;top:1015px;width:60px;text-align:center;font-size:21px;font-weight:bold;letter-spacing:-0.3px;color:#6a2818">RJ</div><div class="t" style="left:1732px;top:1064px;font-size:10.3px;color:#ececec;">Rex &nbsp; Joseph</div>
</body></html>
